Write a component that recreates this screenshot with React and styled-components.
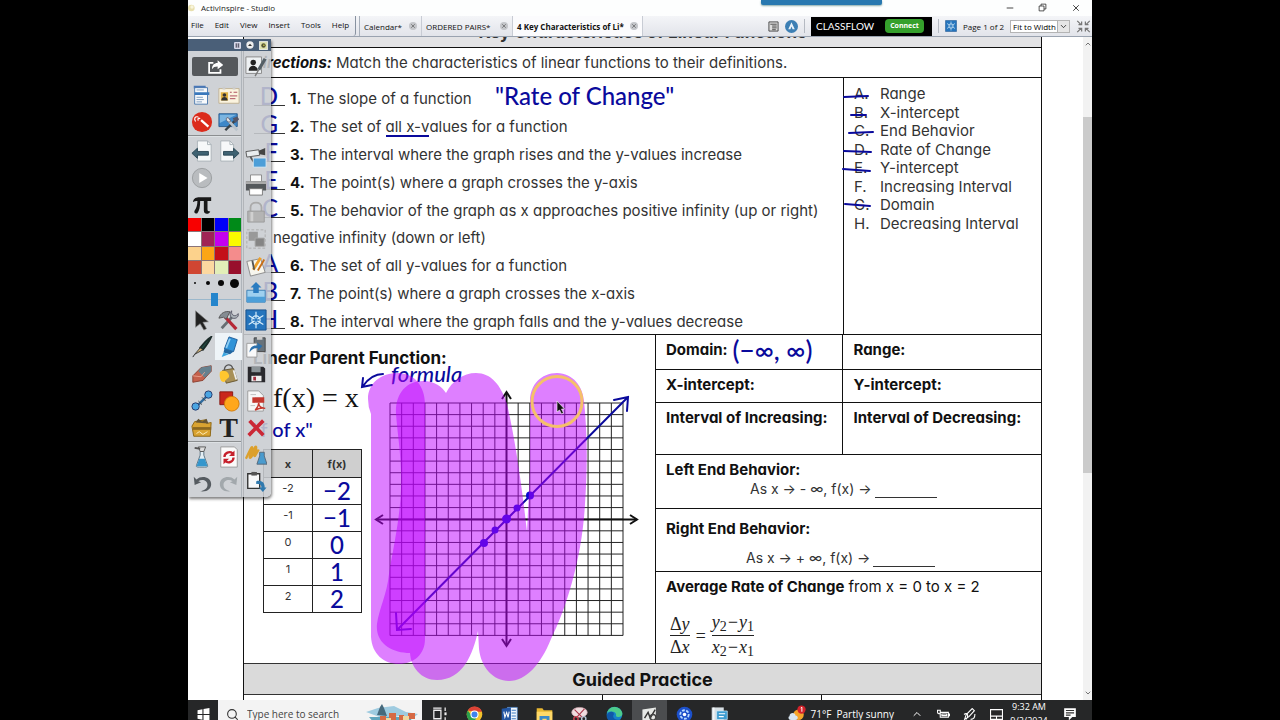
import React, { useState } from 'react'
import styled, { createGlobalStyle } from 'styled-components'
import { Search, ChevronUp, ChevronDown, Minus, X } from 'lucide-react'

const ui = `'Open Sans', 'Noto Sans', sans-serif`
const sheetFont = `Inter, 'Liberation Sans', sans-serif`
const inkBlue = '#0a0a9c'

const GlobalStyle = createGlobalStyle`
  * { box-sizing: border-box; }
  body {
    margin: 0;
    background: #000;
    font-family: ${ui};
    overflow: hidden;
  }
  button, input, select { font: inherit; }
  button { border: 0; padding: 0; background: none; color: inherit; cursor: pointer; }
  ul, ol, p, h2 { margin: 0; padding: 0; list-style: none; }
`

/* ---------- window ---------- */

const Screen = styled.div`
  display: grid;
  grid-template-columns: minmax(0, 1fr);
  padding: 0 188px;
  height: 100vh;
`

const Window = styled.div`
  display: flex;
  flex-direction: column;
  position: relative;
  min-height: 0;
  background: #fff;
`

const TitleBar = styled.header`
  display: flex;
  align-items: center;
  gap: 5px;
  height: 16px;
  font-size: 8px;
  line-height: 16px;
  color: #222;
  background: #fdfefe;
`

const WindowButtons = styled.div`
  display: flex;
  gap: 23px;
  margin-left: auto;
  padding-right: 11px;
  button { display: flex; width: 10px; color: #222; }
`

const DockTab = styled.div`
  position: absolute;
  top: 0;
  right: 210px;
  width: 121px;
  height: 5px;
  border-radius: 0 0 2px 2px;
  background: #2878b0;
  box-shadow: 0 1px 2px #8aa;
`

const MenuBar = styled.div`
  display: flex;
  align-items: stretch;
  height: 21px;
  font-size: 8px;
  color: #111;
  background: linear-gradient(#f4f5f8, #e2e4ea);
  border-bottom: 1px solid #9aa3b0;
`

const Menus = styled.nav`
  display: flex;
  align-items: flex-start;
  gap: 11px;
  width: 168px;
  padding: 3px 0 0 3px;
  border-right: 1px solid #8892a0;
  border-radius: 0 0 3px 0;
`

const Tabs = styled.div`
  display: flex;
  margin-left: 3px;
  border-left: 1px solid #a8b0bb;
`

const Tab = styled.div`
  display: flex;
  align-items: center;
  justify-content: space-between;
  gap: 6px;
  width: ${p => p.$width}px;
  padding: 0 4px;
  white-space: nowrap;
  font-weight: ${p => (p.$active ? 700 : 400)};
  background: ${p => (p.$active ? '#fbfbfd' : 'transparent')};
  border-right: 1px solid #c8ccd4;
`

const CloseTab = styled.button`
  display: grid;
  place-items: center;
  width: 8px;
  height: 8px;
  border-radius: 50%;
  background: #c4c6ca;
  color: #333;
`

const BarTools = styled.div`
  display: flex;
  align-items: center;
  margin-left: auto;
  gap: 6px;
  padding-right: 1px;
  button { display: flex; }
`

const Divider = styled.span`
  width: 1px;
  height: 14px;
  background: #b5bac2;
`

const ClassFlow = styled.div`
  display: flex;
  align-items: center;
  justify-content: space-between;
  width: 121px;
  height: 19px;
  padding: 0 8px 0 5px;
  background: #000;
  color: #fff;
  font: 10px Lato, sans-serif;
`

const Connect = styled.button`
  width: 39px;
  height: 14px;
  justify-content: center;
  border-radius: 4px;
  background: #35a02c;
  color: #fff;
  font: 700 7px/14px 'Open Sans', sans-serif;
`

const ZoomBox = styled.span`
  display: grid;
  grid-template-columns: 1fr 12px;
  align-items: center;
  width: 60px;
  height: 13px;
  border: 1px solid #b4b4b4;
  background: #fff;
  svg { width: 12px; height: 11px; padding: 1px; border-left: 1px solid #b4b4b4; background: #e6e6e6; grid-area: 1 / 2; pointer-events: none; }
`

const ZoomSelect = styled.select`
  appearance: none;
  grid-area: 1 / 1 / 2 / 3;
  height: 11px;
  padding: 0 0 0 2px;
  border: 0;
  background: none;
  font-size: 8px;
  line-height: 11px;
`

const Main = styled.main`
  display: flex;
  flex: 1;
  min-height: 0;
  overflow: hidden;
  padding-left: 55px;
`

/* ---------- worksheet ---------- */

const Sheet = styled.article`
  position: relative;
  flex: 1;
  align-self: flex-start;
  border: solid #111;
  border-width: 0 1px;
  font-family: ${sheetFont};
  font-feature-settings: 'cv11';
  font-size: 15px;
  line-height: 20px;
  color: #333;
`

const SheetTitle = styled.h2`
  display: flex;
  justify-content: center;
  align-items: flex-end;
  height: 10px;
  overflow: hidden;
  background: #e3e3e5;
  font-size: 17px;
  line-height: 30px;
  color: #333;
  white-space: nowrap;
`

const Directions = styled.p`
  height: 31px;
  padding: 5px 8px 0;
  border: solid #111;
  border-width: 1px 0;
  b { color: #111; font-style: italic; }
`

const MatchRow = styled.section`
  display: grid;
  grid-template-columns: 600fr 197fr;
  height: 256px;
`

const Questions = styled.ol`
  display: flex;
  flex-direction: column;
  justify-content: space-between;
  padding: 11px 0 2px;
  border-right: 1px solid #111;
  white-space: nowrap;
`

const Question = styled.li`
  display: flex;
  gap: 5px;
  padding-left: ${p => (p.$continued ? 29 : 10)}px;
  b { min-width: 12px; color: #111; }
`

const Blank = styled.span`
  width: 31px;
  height: 17px;
  padding-right: 7px;
  border-bottom: 1px solid #333;
  text-align: right;
  color: ${inkBlue};
  font: 500 24px/13px Lato, sans-serif;
`

const WordBank = styled.ol`
  display: grid;
  grid-template-rows: repeat(8, 1fr);
  height: 148px;
  margin: 7px 0 0 10px;
  line-height: 18px;
  white-space: nowrap;
  li { display: flex; }
`

const BankLetter = styled.span`
  position: relative;
  width: 26px;
`

const Strike = styled.svg`
  position: absolute;
  left: -12px;
  top: 5px;
`

const Lower = styled.section`
  display: grid;
  grid-template-columns: 412fr 385fr;
  height: 329px;
  border-top: 1px solid #111;
`

const Parent = styled.div`
  position: relative;
  padding: 13px 0 0 9px;
  border-right: 1px solid #111;
  h2 { font-size: 17px; line-height: 20px; color: #111; }
`

const ParentBody = styled.div`
  display: flex;
  gap: 9px;
`

const LeftStack = styled.div`
  display: flex;
  flex-direction: column;
  width: 109px;
`

const Formula = styled.p`
  margin: 15px 0 4px;
  padding-left: 20px;
  color: #111;
  font: 28px/30px 'Liberation Serif', serif;
  white-space: nowrap;
`

const Ink = styled.span`
  color: ${inkBlue};
  font-family: Lato, sans-serif;
  font-weight: 500;
  font-size: ${p => p.$size}px;
  line-height: 24px;
  white-space: nowrap;
`

const FloatingInk = styled(Ink)`
  position: absolute;
  left: ${p => p.$left}px;
  top: ${p => p.$top}px;
  font-style: ${p => (p.$slant ? 'italic' : 'normal')};
`

const InkArrow = styled.svg`
  position: absolute;
  left: 116px;
  top: 36px;
`

const ValueTable = styled.table`
  margin: 8px 0 0 10px;
  width: 99px;
  table-layout: fixed;
  border-collapse: collapse;
  color: #333;
  font-size: 11px;
  line-height: 14px;
  th { height: 28px; padding: 0; border: 1px solid #222; background: #cfcfcf; }
  td { height: 27px; padding: 3px 0 0; border: 1px solid #222; text-align: center; vertical-align: top; }
  td + td { padding: 0; vertical-align: middle; }
`

const Graph = styled.svg`
  position: relative;
  z-index: 1;
  flex: none;
  margin-top: 1px;
  overflow: visible;
`

const Facts = styled.div`
  display: grid;
  grid-template-columns: 187fr 197fr;
  grid-template-rows: 35px 33px 52px 54px 63px 1fr;
  color: #111;
  white-space: nowrap;
`

const Fact = styled.div`
  padding: ${p => p.$pad || 5}px 10px 0;
  grid-column: ${p => (p.$wide ? 'span 2' : 'auto')};
  border-bottom: ${p => (p.$last ? 0 : 1)}px solid #111;
  border-right: ${p => (p.$split ? 1 : 0)}px solid #111;
`

const Answered = styled.div`
  display: flex;
  align-items: center;
  gap: 5px;
  height: 20px;
`

const Limit = styled.p`
  display: flex;
  align-items: flex-end;
  gap: 3px;
  margin-top: ${p => p.$gap}px;
  padding-left: ${p => p.$indent}px;
  font-size: 14px;
  line-height: 18px;
  color: #333;
  i { width: 62px; height: 16px; border-bottom: 1px solid #333; }
`

const Equation = styled.div`
  display: flex;
  align-items: center;
  gap: 5px;
  margin: 14px 0 0 4px;
  color: #222;
  font: italic 18px/22px 'Liberation Serif', serif;
`

const Fraction = styled.span`
  display: flex;
  flex-direction: column;
  text-align: center;
  span:first-child { border-bottom: 1px solid #222; }
  em { font-style: normal; }
  small { position: relative; top: 3px; font-size: 14px; font-style: normal; }
`

const Guided = styled.h2`
  height: 32px;
  border: solid #333;
  border-width: 1px 0;
  background: #dadada;
  color: #111;
  text-align: center;
  font-size: 18px;
  line-height: 32px;
`

const NextRow = styled.div`
  display: grid;
  grid-template-columns: 358fr 219fr 220fr;
  height: 20px;
  span + span { border-left: 1px solid #111; }
`

const Underline = styled.span`
  display: inline-block;
  height: 20px;
  border-bottom: 2px solid ${inkBlue};
`

const ScrollBar = styled.div`
  display: flex;
  flex-direction: column;
  align-items: center;
  justify-content: space-between;
  width: 9px;
  margin-left: 41px;
  background: #f2f2f2;
  color: #333;
  button { display: flex; height: 14px; align-items: center; }
`

const Thumb = styled.div`
  width: 9px;
  height: 356px;
  margin: 66px 0 auto;
  background: #cbcbcb;
`

/* ---------- toolbox ---------- */

const Toolbox = styled.aside`
  position: absolute;
  z-index: 2;
  top: 39px;
  left: 0;
  width: 83px;
  border-radius: 0 0 5px 0;
  overflow: hidden;
  background: rgba(200, 204, 208, 0.88);
  box-shadow: 1px 2px 3px rgba(0, 0, 0, 0.5);
`

const ToolHeader = styled.div`
  display: flex;
  align-items: center;
  justify-content: flex-end;
  gap: 5px;
  height: 12px;
  padding-right: 3px;
  background: #4a5f78;
  button { display: flex; }
`

const ToolColumns = styled.div`
  display: grid;
  grid-template-columns: 54px 1fr;
`

const LeftTools = styled.div`
  border-right: 1px solid #aeb4ba;
`

const RightTools = styled.div`
  padding-top: 2px;
`

const ShareButton = styled.button`
  display: grid;
  place-items: center;
  width: 46px;
  height: 19px;
  margin: 6px 4px 5px;
  border-radius: 2px;
  background: #55585b;
`

const ToolGrid = styled.div`
  display: grid;
  grid-template-columns: 1fr 1fr;
  border-bottom: ${p => (p.$line ? 2 : 0)}px groove #dde1e4;
`

const Tool = styled.button`
  display: grid;
  place-items: center;
  width: 27px;
  height: 27px;
  background: ${p => (p.$on ? '#eef4f8' : 'none')};
  margin-bottom: ${p => (p.$gap ? 64 : 0)}px;
`

const Palette = styled.div`
  display: grid;
  grid-template-columns: repeat(4, 1fr);
  gap: 1px;
  height: 56px;
  background: #8a7478;
`

const Swatch = styled.button`
  background: ${p => p.$color};
`

const Sizes = styled.div`
  display: grid;
  grid-template-columns: repeat(4, 1fr);
  height: 18px;
  place-items: center;
`

const Dot = styled.button`
  width: ${p => p.$size}px;
  height: ${p => p.$size}px;
  border-radius: 50%;
  background: #080808;
`

const WidthSlider = styled.input`
  appearance: none;
  display: block;
  width: 53px;
  height: 14px;
  margin: 0;
  background: linear-gradient(#9bb8cc, #9bb8cc) center / 100% 1px no-repeat;
  &::-webkit-slider-thumb {
    appearance: none;
    width: 7px;
    height: 13px;
    background: #2585cc;
  }
`

/* ---------- taskbar ---------- */

const TaskbarClip = styled.footer`
  height: 20px;
  overflow: hidden;
`

const Taskbar = styled.div`
  display: flex;
  align-items: center;
  height: 28px;
  background: #262728;
  color: #fff;
  font-size: 10px;
`

const TaskButton = styled.button`
  display: grid;
  place-items: center;
  width: ${p => p.$width || 35}px;
  height: 28px;
  background: ${p => (p.$on ? '#4b4d4f' : 'none')};
`

const SearchBox = styled.label`
  display: flex;
  align-items: center;
  gap: 8px;
  width: 204px;
  height: 28px;
  padding-left: 8px;
  background: #f3f3f3;
  color: #333;
  input {
    width: 110px;
    padding: 0;
    border: 0;
    outline: 0;
    background: none;
    font-size: 10px;
  }
  input::placeholder { color: #444; }
`

const Tray = styled.div`
  display: flex;
  align-items: center;
  margin-left: auto;
`

const Weather = styled.button`
  display: flex;
  align-items: center;
  gap: 5px;
  margin-right: 10px;
  white-space: nowrap;
`

const Clock = styled.time`
  width: 38px;
  text-align: center;
  font-size: 9px;
  line-height: 14px;
  white-space: nowrap;
`

/* ---------- icons ---------- */

const Svg = ({ s = 22, children, ...rest }) => (
  <svg width={s} height={s} viewBox="0 0 24 24" fill="none" {...rest}>{children}</svg>
)

const icons = {
  browser: <><path d="M3 2h13v3H3z" fill="#4a78b8" /><path d="M4 4h14v18H4z" fill="#f8fafc" stroke="#4876ac" /><path d="M4 9h16v3H4z" fill="#3978bc" /><path d="M6 6.500h8M6 14.500h7M6 17h8M6 19.500h6" stroke="#7798bc" /></>,
  idCard: <><path d="M1 5h22v16H1z" fill="#fbf4df" stroke="#c0b090" /><path d="M3 9h8v9H3z" fill="#e0b040" /><circle cx="7" cy="12" r="2" fill="#333" /><path d="M3.500 18c0-5 7-5 7 0z" fill="#333" /><path d="M13 9h2m2 0h4M13 13h8m-8 3h6" stroke="#a45" /><path d="M5 3h3v3H5zM16 3h3v3h-3z" fill="#ccc" /></>,
  record: <><circle cx="12" cy="12" r="11" fill="#db2b1b" /><path d="M11 10l8 7" stroke="#fff" strokeWidth="2.500" /><path d="M10 8.500c-2-1.500-3 0-2 2M8 6.500c-4-1-5 2-3 5" stroke="#fff" strokeWidth="1.300" /></>,
  designer: <><path d="M1 3h20v14H1z" fill="#3d87c8" stroke="#2a5b8c" /><path d="M2 4h18L2 13z" fill="#7ab4e0" /><path d="M8 21l10-10" stroke="#3a4248" strokeWidth="2.600" /><path d="M12 11l9 10" stroke="#b9c3cb" strokeWidth="3" /><path d="M9 8c0 4 3 5 5 3l-3-4z" fill="#dde4e8" stroke="#667" /><path d="M16 8l5-2 2 3-4 4z" fill="#556" /></>,
  prev: <><path d="M9 1h9l4 4v18H7V1z" fill="#f6f8f9" stroke="#aab2b8" /><path d="M18 1v4h4" stroke="#aab2b8" /><path d="M1 14.500l6-5.500v3.500h12v4H7V20z" fill="#3f6272" stroke="#294552" /></>,
  next: <><path d="M3 1h10l4 4v18H3z" fill="#f6f8f9" stroke="#aab2b8" /><path d="M13 1v4h4" stroke="#aab2b8" /><path d="M23 14.500L17 9v3.500H6v4h11V20z" fill="#3f6272" stroke="#294552" /></>,
  play: <><circle cx="12" cy="12" r="10.500" fill="#b9bcbf" stroke="#999c9f" /><path d="M9 6.500l9 5.500-9 5.500z" fill="#fff" /></>,
  pi: <path d="M2 9c1-5 4-5.500 7-5.500h13v4h-4V17c0 2 1 2 3 2-1 3-7 4-7-1V7.500h-4C10 14 9 18 7 21c-3 1-4-1-3-3 2-3 3-6 3-10.500-2 0-3 0-5 1.500z" fill="#181818" />,
  pointer: <path d="M5 2l14 12-6 .5 4 7-3 1.500-4-7-5 4z" fill="#222" stroke="#888" strokeWidth=".7" />,
  tools: <><path d="M4 21L17 7" stroke="#666d72" strokeWidth="3" /><path d="M8 9l12 13" stroke="#b52836" strokeWidth="3.500" /><path d="M1 10c2-6 7-8 12-7l-4 8-3-2z" fill="#858c92" stroke="#555" /><path d="M15 2c-1 4 2 6 5 5l2-2c1 4-3 6-6 5s-4-6-1-8z" fill="#aab3b8" stroke="#556" /></>,
  pen: <><path d="M22 1c-5 3-9 8-12 12l3 2c4-5 7-9 9-14z" fill="#234b42" stroke="#1a2a28" strokeWidth="2" /><path d="M10 13l-6 7 9-5z" fill="#d8b878" stroke="#333" /><path d="M4 20l-2 3" stroke="#222" /></>,
  highlighter: <><path d="M12 1l9 3-4 13-10-3z" fill="#2f93d8" stroke="#1a5a98" /><path d="M7 14l10 3-4 3-7-2z" fill="#2166a0" /><path d="M6 18l6 2-8 3z" fill="#3aa5e0" /><path d="M13 3l-4 10" stroke="#90cdf2" strokeWidth="2" /></>,
  eraser: <><path d="M2 14l9-9 11-2v6l-9 10-11 2z" fill="#c5604c" stroke="#8a4030" /><path d="M11 5l11-2v6l-7 7-7-7z" fill="#65808e" /><path d="M2 14l9 1 4-5" stroke="#e8a08c" /></>,
  fill: <><path d="M5 8l12-2 4 13-12 3z" fill="#a89058" stroke="#665530" /><path d="M7 8c0-7 8-8 9-2" stroke="#555" strokeWidth="1.500" /><path d="M2 10c3-3 9-1 10 3s-3 3-4 7c-3 2-7-1-6-10z" fill="#ffc62e" /><path d="M17 8l3 10" stroke="#eee" strokeWidth="2" /></>,
  connector: <><path d="M5 19L19 5" stroke="#2f6b9e" strokeWidth="2.500" /><circle cx="19" cy="5" r="4" fill="#4aa5e2" stroke="#236" /><circle cx="5" cy="18" r="4" fill="#4aa5e2" stroke="#236" /><path d="M12 8l4 4M8 12l4 4" stroke="#444" /></>,
  shapes: <><path d="M2 2h14v14H2z" fill="#c9281c" stroke="#851810" /><circle cx="15" cy="15" r="8" fill="#ffa71c" stroke="#d07808" /></>,
  clips: <><path d="M1 10l3-5 12-2 1 4 5-1-1 15H3z" fill="#d9a331" stroke="#8a6412" /><path d="M5 6l3-4 4 3 5-3 2 5" fill="#665533" /><path d="M2 11h20v3H2z" fill="#8c6820" /><path d="M6 18l3-2 4 3 5-3" stroke="#fff0c0" /></>,
  undo: <path d="M3 4l1 9 7-3-3-1c4-3 10-1 10 4 0 4-4 6-8 7 8 1 12-3 12-8C22 4 11 2 6 7z" fill="#555b60" />,
  redo: <path d="M21 4l-1 9-7-3 3-1C12 6 6 8 6 13c0 4 4 6 8 7-8 1-12-3-12-8C2 4 13 2 18 7z" fill="#a2a8ac" />,
  flask: <><path d="M10 6h4v4l4 11c1 2-1 2-3 2H9c-2 0-4 0-3-2l4-11z" fill="#e4eef4" stroke="#557080" /><path d="M9 14h6l3 8H6z" fill="#3596cc" /><path d="M8 1h8l-2 5h-4z" fill="#ddd" stroke="#555" /><path d="M10 3L4 2" stroke="#555" strokeWidth="2" /></>,
  reset: <><path d="M3 1h15l3 3v19H3z" fill="#fafafa" stroke="#999" /><path d="M7 12a5.500 5.500 0 0 1 9-4M17 12.500a5.500 5.500 0 0 1-9 4" stroke="#c6202c" strokeWidth="2.500" /><path d="M18 5v6h-6zM6 20v-6h6z" fill="#c6202c" /></>,
  profile: <><path d="M1 1h17v18H1z" fill="#eef1f3" stroke="#888" /><circle cx="9" cy="7" r="3" fill="#222" /><path d="M4 16c0-7 10-7 10 0z" fill="#222" /><path d="M22 3l-7 12" stroke="#555f66" strokeWidth="3.500" /><path d="M15 15l-4 7" stroke="#777" strokeWidth="1.500" /></>,
  camera: <><path d="M1 5l14-2 1 6-14 2z" fill="#e8ecee" stroke="#555" /><path d="M15 4l7-3v8l-6-1z" fill="#444" /><path d="M6 11l4 6" stroke="#555" strokeWidth="2" /><path d="M9 12h14v10H9z" fill="#4c9ed8" stroke="#dfeaf2" /></>,
  printer: <><path d="M6 1h12v8H6z" fill="#fafafa" stroke="#888" /><path d="M1 8h22v10H1z" fill="#54585b" /><path d="M1 8h22v3H1z" fill="#aaa" /><path d="M5 16h14v7H5z" fill="#fff" stroke="#777" /></>,
  lock: <><path d="M6 12V7c0-7 12-7 12 0v5" stroke="#aaa" strokeWidth="2" /><path d="M3 11h18v12H3z" fill="#b4b4b4" stroke="#999" /><path d="M6 12h3v10H6z" fill="#d0d0d0" /></>,
  group: <><path d="M2 2h20v20H2z" stroke="#aaa" strokeDasharray="3 2" /><path d="M4 4h10v10H4z" fill="#999" /><path d="M11 11h10v9H11z" fill="#858585" stroke="#aaa" /></>,
  notes: <><path d="M2 7l15-3 5 15-16 4z" fill="#f7f6ee" stroke="#888" /><path d="M9 16L17 3" stroke="#f0a028" strokeWidth="3" /><path d="M14 17l7-12" stroke="#c96d16" strokeWidth="2" /><path d="M8 6l2 10" stroke="#555" strokeWidth="2" /></>,
  upload: <><path d="M2 9h20v13H2z" fill="#9fd0ef" stroke="#3a7eb4" /><path d="M2 16h20v6H2z" fill="#4d9fd8" /><path d="M12 0l6 6h-3v6H9V6H6z" fill="#2b7cc0" /></>,
  atom: <><path d="M1 1h22v22H1z" fill="#2575bd" stroke="#164f8a" /><g stroke="#d9eefa" strokeWidth="1.300"><circle cx="12" cy="12" r="4.500" /><path d="M12 3v18M4 7l16 10M20 7L4 17" /></g><circle cx="12" cy="12" r="2" fill="#2575bd" /></>,
  paste: <><path d="M10 2h12v15H10z" fill="#68727a" stroke="#444" /><path d="M13 0h6v4h-6z" fill="#ccc" /><path d="M2 8h11v15H2z" fill="#f8f9fa" stroke="#999" /><path d="M5 18c0-6 4-8 9-8l-1-3 6 4-5 5v-3c-4 0-7 2-9 5z" fill="#2b70ac" /></>,
  save: <><path d="M3 4h17l2 2v15H3z" fill="#29292d" /><path d="M7 4h10v6H7z" fill="#8c9498" /><path d="M7 14h11v6H7z" fill="#eee" /><path d="M9 15h3v4H9z" fill="#a33040" /></>,
  pdf: <><path d="M3 1h12l5 5v17H3z" fill="#f6f6f6" stroke="#999" /><path d="M8 8h13v6H8z" fill="#c5362d" /><path d="M11 22c3-3 4-5 4-8 0 4 3 6 7 6-4-1-7 0-11 2z" fill="#fff" stroke="#c5362d" strokeWidth="1.500" /><path d="M6 5h6M6 17h5" stroke="#bbb" /></>,
  remove: <path d="M5 4l15 16M20 4L4 20" stroke="#cb2836" strokeWidth="4" />,
  annotate: <><path d="M1 16C5 8 7 2 8 4s-5 12-2 11 4-13 6-12-4 11-1 10l4-7" stroke="#dca02c" strokeWidth="2.500" /><path d="M16 9h5v4l3 9H13l3-9z" fill="#4a9bce" stroke="#567" /></>,
  duplicate: <><path d="M3 3h13v16H3z" fill="#f8f9fa" stroke="#333" strokeWidth="1.500" /><path d="M7 1h6v4H7z" fill="#555" /><path d="M12 14c4 0 6 1 6 4h-3l4.500 5 4-5h-2c0-6-4-8-9-7z" fill="#2f79ae" /></>,
}

const TextTool = styled.span`
  font: 700 28px/26px 'Liberation Serif', serif;
  color: #222;
`

const topTools = ['browser', 'idCard', 'record', 'designer']
const pageTools = ['prev', 'next', 'play']
const drawTools = ['pointer', 'tools', 'pen', 'highlighter', 'eraser', 'fill', 'connector', 'shapes', 'clips', 'text']
const lastTools = ['flask', 'reset', 'undo', 'redo']
const sideTools = ['profile', 'camera', 'printer', 'lock', 'group', 'notes', 'upload', 'atom', 'paste', 'save', 'pdf', 'remove', 'annotate', 'duplicate']

const colors = [
  '#f80000', '#000000', '#0000f8', '#008a18',
  '#ffffff', '#a02455', '#c400ee', '#fafa00',
  '#fcd28c', '#fca616', '#c41018', '#f48c8c',
  '#d04632', '#fcd8a0', '#e2eeb8', '#98102c',
]

const questions = [
  ['D', '1.', 'The slope of a function'],
  ['G', '2.', <>The set of <Underline>all x-v</Underline>alues for a function</>],
  ['F', '3.', 'The interval where the graph rises and the y-values increase'],
  ['E', '4.', 'The point(s) where a graph crosses the y-axis'],
  ['C', '5.', 'The behavior of the graph as x approaches positive infinity (up or right)'],
  [null, '', 'negative infinity (down or left)'],
  ['A', '6.', 'The set of all y-values for a function'],
  ['B', '7.', 'The point(s) where a graph crosses the x-axis'],
  ['H', '8.', 'The interval where the graph falls and the y-values decrease'],
]

const bank = [
  ['A.', 'Range', [2, 26, 7, 6]],
  ['B.', 'X-intercept', [9, 24, 6, 6]],
  ['C.', 'End Behavior', [7, 31, 6, 5]],
  ['D.', 'Rate of Change', [2, 29, 5, 6]],
  ['E.', 'Y-intercept', [1, 28, 5, 7]],
  ['F.', 'Increasing Interval'],
  ['G.', 'Domain', [3, 28, 3, 5]],
  ['H.', 'Decreasing Interval'],
]

const values = [['-2', '−2'], ['-1', '−1'], ['0', '0'], ['1', '1'], ['2', '2']]

function ToolButtons({ names, active, onPick }) {
  return names.map(name => (
    <Tool key={name} aria-label={name} $on={active === name} $gap={name === 'profile'} onClick={() => onPick(name)}>
      {name === 'text' ? <TextTool>T</TextTool> : <Svg>{icons[name]}</Svg>}
    </Tool>
  ))
}

function ToolPanel() {
  const [tool, setTool] = useState('highlighter')
  const [penWidth, setPenWidth] = useState(50)

  return (
    <Toolbox>
      <ToolHeader>
        <button aria-label="Pin"><Svg s={7}><path d="M2 2h20v20H2z" fill="#bbc" stroke="#eef" strokeWidth="3" /><path d="M8 5v14M15 5v14" stroke="#445" strokeWidth="3" /></Svg></button>
        <button aria-label="Roll up"><Svg s={8}><circle cx="12" cy="12" r="11" fill="#eee" /><path d="M6 15l6-7 6 7z" fill="#333" /></Svg></button>
        <button aria-label="Profile"><Svg s={9}><path d="M1 1h22v22H1z" fill="#dfe3b0" stroke="#fff" strokeWidth="2" /><circle cx="12" cy="12" r="6" fill="#553" /><circle cx="13" cy="11" r="2" fill="#dd4" /></Svg></button>
      </ToolHeader>
      <ToolColumns>
        <LeftTools>
          <ShareButton aria-label="Share">
            <Svg s={17}><path d="M9 7H3v14h16v-5" stroke="#fff" strokeWidth="2.500" /><path d="M7 16c0-6 3-9 8-9V3l8 7-8 6v-4c-4 0-6 1-8 4z" fill="#fff" /></Svg>
          </ShareButton>
          <ToolGrid $line><ToolButtons names={topTools} active={tool} onPick={setTool} /></ToolGrid>
          <ToolGrid><ToolButtons names={pageTools} active={tool} onPick={setTool} /></ToolGrid>
          <ToolGrid><ToolButtons names={['pi']} active={tool} onPick={setTool} /></ToolGrid>
          <Palette>
            {colors.map(c => <Swatch key={c} $color={c} aria-label={c} />)}
          </Palette>
          <Sizes>
            {[2, 4, 6, 9].map(s => <Dot key={s} $size={s} aria-label={`${s} px`} />)}
          </Sizes>
          <WidthSlider type="range" aria-label="Pen width" value={penWidth} onChange={e => setPenWidth(e.target.value)} />
          <ToolGrid $line><ToolButtons names={drawTools} active={tool} onPick={setTool} /></ToolGrid>
          <ToolGrid><ToolButtons names={lastTools} active={tool} onPick={setTool} /></ToolGrid>
        </LeftTools>
        <RightTools><ToolButtons names={sideTools} active={tool} onPick={setTool} /></RightTools>
      </ToolColumns>
    </Toolbox>
  )
}

// Drawn in the coordinates of the flipchart page, 20 x 20 cells
function Plot() {
  const lines = Array.from({ length: 21 }, (_, i) => i)
  return (
    <Graph width="272" height="280" viewBox="370 370 272 280" fill="none">
      <g stroke="#222">
        {lines.map(i => <path key={i} d={`M${389 + i * 11.65} 404V636.500M389 ${404 + i * 11.62}H622`} />)}
      </g>
      <g stroke="#111" strokeWidth="2">
        <path d="M375 520.500H636M505.500 394V646" />
        <path d="M382 516l-7 4.500 7 4.500M629 516l7 4.500-7 4.500M501 400l4.500-7 4.500 7M501 640l4.500 7 4.500-7" />
      </g>
      <path d="M397 630L626 399M395 614l1 17 14-1M613 401l14-3-1 14" stroke={inkBlue} strokeWidth="2" strokeLinecap="round" />
      <g fill="#0808d0">
        <circle cx="483" cy="544" r="4" />
        <circle cx="494" cy="531" r="3.500" />
        <circle cx="505.500" cy="520" r="4.500" />
        <circle cx="516" cy="509" r="3.500" />
        <circle cx="529" cy="496.500" r="4" />
      </g>
      <g fill="rgba(190, 0, 255, 0.5)">
        <path d="M367 400C367 384 380 374 397 374C414 374 424 388 424 405V640C424 655 413 665 398 665C383 665 371 655 370 638V415Q367 408 367 400Z" />
        <path d="M376 625C378 610 386 595 388 575C392 550 399 520 400 490C401 460 397 440 395 415C394 395 405 382 422 382C434 382 441 388 445 394C451 382 462 374 475 374C490 374 500 386 506 405C514 440 520 480 526 533L529 470V402C529 386 540 374 556 374C572 374 582 388 583 402C587 440 586 475 584 505C581 560 565 610 550 640C540 665 525 682 508 682C492 682 480 668 478 650L477 632C472 655 462 681 436 681C420 681 410 668 409 654C392 654 374 645 376 625Z" />
      </g>
      <circle cx="556" cy="402.500" r="25" stroke="#f5c06a" strokeWidth="3" />
      <path d="M556 402v11l2.500-2 2 4 2-1-2-4h3z" fill="#111" stroke="#fff" strokeWidth=".6" />
    </Graph>
  )
}

function Worksheet() {
  return (
    <Sheet>
      <SheetTitle>Key Characteristics of Linear Functions</SheetTitle>
      <Directions><b>Directions:</b> Match the characteristics of linear functions to their definitions.</Directions>

      <MatchRow>
        <Questions>
          {questions.map(([answer, number, text]) => (
            <Question key={number} $continued={!answer}>
              {answer && <Blank>{answer}</Blank>}
              {answer && <b>{number}</b>}
              <span>{text}</span>
            </Question>
          ))}
        </Questions>
        <WordBank>
          {bank.map(([letter, word, mark]) => (
            <li key={letter}>
              <BankLetter>
                {letter}
                {mark && (
                  <Strike width="36" height="10" stroke={inkBlue} strokeWidth="2" strokeLinecap="round">
                    <path d={`M${mark[0]} ${mark[2]}L${mark[1]} ${mark[3]}`} />
                  </Strike>
                )}
              </BankLetter>
              {word}
            </li>
          ))}
        </WordBank>
      </MatchRow>
      <FloatingInk $size={24} $left={251} $top={47}>"Rate of Change"</FloatingInk>

      <Lower>
        <Parent>
          <h2>Linear Parent Function:</h2>
          <FloatingInk $size={22} $left={147} $top={27} $slant>formula</FloatingInk>
          <InkArrow width="26" height="18" fill="none" stroke={inkBlue} strokeWidth="2" strokeLinecap="round">
            <path d="M23 3C14 3 8 8 3 15M3 7L2 16L12 14" />
          </InkArrow>
          <ParentBody>
            <LeftStack>
              <Formula>f(x) = x</Formula>
              <Ink $size={20}>"f of x"</Ink>
              <ValueTable>
                <thead><tr><th>x</th><th>f(x)</th></tr></thead>
                <tbody>
                  {values.map(([x, y]) => (
                    <tr key={x}><td>{x}</td><td><Ink $size={24}>{y}</Ink></td></tr>
                  ))}
                </tbody>
              </ValueTable>
            </LeftStack>
            <Plot />
          </ParentBody>
        </Parent>

        <Facts>
          <Fact $split>
            <Answered><b>Domain:</b><Ink $size={26}>(−∞, ∞)</Ink></Answered>
          </Fact>
          <Fact><b>Range:</b></Fact>
          <Fact $split><b>X-intercept:</b></Fact>
          <Fact><b>Y-intercept:</b></Fact>
          <Fact $split><b>Interval of Increasing:</b></Fact>
          <Fact><b>Interval of Decreasing:</b></Fact>
          <Fact $wide>
            <b>Left End Behavior:</b>
            <Limit $gap={0} $indent={84}>As x → - ∞, f(x) →<i /></Limit>
          </Fact>
          <Fact $wide $pad={10}>
            <b>Right End Behavior:</b>
            <Limit $gap={10} $indent={80}>As x → + ∞, f(x) →<i /></Limit>
          </Fact>
          <Fact $wide $last>
            <b>Average Rate of Change</b> from x = 0 to x = 2
            <Equation>
              <Fraction>
                <span><em>Δ</em>y</span>
                <span><em>Δ</em>x</span>
              </Fraction>
              =
              <Fraction>
                <span>y<small>2</small>−y<small>1</small></span>
                <span>x<small>2</small>−x<small>1</small></span>
              </Fraction>
            </Equation>
          </Fact>
        </Facts>
      </Lower>

      <Guided>Guided Practice</Guided>
      <NextRow><span /><span /><span /></NextRow>
    </Sheet>
  )
}

const taskIcons = {
  taskView: <><path d="M4 6h10v12H4zM4 2v2M14 2v2M4 22v-2M14 22v-2M4 3h10M4 21h10M20 2v5M20 16v6" stroke="#eee" strokeWidth="1.800" /><path d="M19 9h3v4h-3z" fill="#eee" /></>,
  chrome: <><circle cx="12" cy="12" r="11" fill="#f4c22c" /><path d="M2.500 6.500A11 11 0 0 1 22.500 8H12z" fill="#dd4236" /><path d="M2.500 6.500A11 11 0 0 0 11 23l5-8.500-9-2z" fill="#2ba04e" /><circle cx="12" cy="12" r="5" fill="#3f83ee" stroke="#fff" strokeWidth="1.500" /></>,
  word: <><path d="M9 2h14v20H9z" fill="#f1f6fc" stroke="#4c88cc" /><path d="M15 6h6m-6 4h6m-6 4h6m-6 4h6" stroke="#3c7ac0" strokeWidth="1.500" /><path d="M1 4l13-2v20L1 20z" fill="#2256a4" /><path d="M4 8l1.500 8L8 9l2 7 1.500-8" stroke="#fff" strokeWidth="1.500" /></>,
  explorer: <><path d="M1 3h8l2 3h12v16H1z" fill="#e8b730" /><path d="M1 8h22v14H1z" fill="#ffd968" /><path d="M5 22v-8h14v8h-4v-4H9v4z" fill="#3b8ac8" /></>,
  snip: <><ellipse cx="12" cy="9" rx="11" ry="7" fill="#f0dde0" stroke="#c8a0a8" /><path d="M5 5l12 12M19 4L8 16" stroke="#a8354a" strokeWidth="1.500" /><circle cx="7" cy="18" r="3" stroke="#d04050" strokeWidth="2" /><circle cx="18" cy="18" r="3" stroke="#b8c8d8" strokeWidth="2" /></>,
  edge: <><circle cx="12" cy="12" r="11" fill="#1683c8" /><path d="M1.500 10C4-2 21-1 23 10c1 6-7 7-9 4 2-6-8-8-12.500-4z" fill="#4ccb8c" /><path d="M1 13c2-6 11-7 10-1-3 4 2 9 9 7C13 27 0 22 1 13z" fill="#1058a8" /></>,
  inspire: <><path d="M2 5l19-3v19l-19 2z" fill="#e7e9e6" /><path d="M5 17l5-8 3 8 7-12" stroke="#333" strokeWidth="2" /><circle cx="17" cy="16" r="4" stroke="#444" strokeWidth="2" /></>,
  wheel: <><circle cx="12" cy="12" r="11" fill="#1c50ca" /><circle cx="12" cy="12" r="6" stroke="#b5d8ff" strokeWidth="2.500" strokeDasharray="4 2" /><circle cx="12" cy="12" r="2.500" fill="#fff" /></>,
  panel: <><path d="M1 2h17v20H1z" fill="#d7dfe4" /><path d="M8 7h15v12H8z" fill="#3a9bd0" stroke="#cfeaf8" /><path d="M4 2v20M11 11h9M11 15h7" stroke="#fff" strokeWidth="1.500" /></>,
}

function TaskRow() {
  return (
    <TaskbarClip>
      <Taskbar>
        <TaskButton $width={30} aria-label="Start">
          <Svg s={13}><path d="M1 4l9-1.500V11H1zM12 2l11-2v11H12zM1 13h9v8.500L1 20zM12 13h11v11l-11-2z" fill="#fff" /></Svg>
        </TaskButton>
        <SearchBox>
          <Search size={13} />
          <input placeholder="Type here to search" aria-label="Search" />
          <svg width="54" height="20" viewBox="0 0 54 20" fill="none">
            <path d="M1 8l12-4 16-2 12 6 12 2-5 4-14-2-14 3z" fill="#9ecbe0" />
            <path d="M12 11l3-8 2-3 2 4 3 8z" fill="#45697c" />
            <path d="M4 13h44l-5 7H10z" fill="#5fa5bd" />
            <path d="M15 12h6v5h-6zM24 9h7v7h-7zM34 11h5v5h-5zM43 9h7v6h-7z" fill="#d66a45" />
            <path d="M21 14h5v5h-5zM38 12h6v5h-6z" fill="#f0d8a0" />
          </svg>
        </SearchBox>
        {Object.keys(taskIcons).map(name => (
          <TaskButton key={name} aria-label={name} $on={name === 'inspire'}>
            <Svg s={17}>{taskIcons[name]}</Svg>
          </TaskButton>
        ))}
        <Tray>
          <Weather>
            <Svg s={18}><circle cx="14" cy="13" r="7" fill="#f6a52a" /><path d="M2 15c0-5 7-6 8-1 4 0 4 6 0 6H4c-4 0-4-5-2-5z" fill="#d8e6f2" /><circle cx="18" cy="6" r="5.500" fill="#d3222a" /><path d="M17 4l1.500-1v6" stroke="#fff" strokeWidth="1.300" /></Svg>
            <span>71°F</span><span>Partly sunny</span>
          </Weather>
          <TaskButton $width={26} aria-label="Show hidden icons"><ChevronUp size={12} /></TaskButton>
          <TaskButton $width={26} aria-label="Battery"><Svg s={13} stroke="#fff" strokeWidth="2"><path d="M6 8h15v9H6zM21 11h2v3h-2M1 4h5v4c0 4-5 3-5 0zM9 11h9v3H9z" /></Svg></TaskButton>
          <TaskButton $width={26} aria-label="Pen"><Svg s={13} stroke="#fff" strokeWidth="2"><path d="M3 21l3-9L17 1l4 4-10 11zM2 12c6-6 9 3 4 9M14 21c5 0 8-4 8-10" /></Svg></TaskButton>
          <TaskButton $width={28} aria-label="Touchpad"><Svg s={13} stroke="#fff" strokeWidth="2"><path d="M1 3h22v18H1zM1 15h22M12 15v6" /></Svg></TaskButton>
          <Clock>9:32 AM<br />9/2/2024</Clock>
          <TaskButton $width={44} aria-label="Notifications"><Svg s={14}><path d="M2 2h20v15h-6l-6 6v-6H2z" fill="#fff" /><path d="M5 6h14M5 10h14M5 14h8" stroke="#333" strokeWidth="2" /></Svg></TaskButton>
        </Tray>
      </Taskbar>
    </TaskbarClip>
  )
}

function App() {
  return (
    <Screen>
      <GlobalStyle />
      <Window>
        <TitleBar>
          <Svg s={8}><circle cx="10" cy="12" r="10" fill="#e8dfae" /><circle cx="12" cy="9" r="5" fill="#f8f5dc" /></Svg>
          ActivInspire - Studio
          <WindowButtons>
            <button aria-label="Minimize"><Minus size={10} /></button>
            <button aria-label="Restore"><Svg s={9} stroke="#222" strokeWidth="2"><path d="M3 8h13v13H3zM8 8V3h13v13h-5" /></Svg></button>
            <button aria-label="Close"><X size={10} /></button>
          </WindowButtons>
        </TitleBar>
        <DockTab />
        <MenuBar>
          <Menus>
            {['File', 'Edit', 'View', 'Insert', 'Tools', 'Help'].map(m => <button key={m}>{m}</button>)}
          </Menus>
          <Tabs>
            {[['Calendar*', 62], ['ORDERED PAIRS*', 91], ['4 Key Characteristics of Li*', 130]].map(([name, width], i) => (
              <Tab key={name} $width={width} $active={i === 2}>
                {name}
                <CloseTab aria-label={`Close ${name}`}><X size={6} /></CloseTab>
              </Tab>
            ))}
          </Tabs>
          <BarTools>
            <button aria-label="Notes"><Svg s={11}><path d="M2 2h20v20H2z" fill="#ddd" stroke="#444" strokeWidth="2" /><path d="M5 7h14M9 11h10M9 15h10M9 19h8" stroke="#444" strokeWidth="2" /></Svg></button>
            <button aria-label="Account"><Svg s={13}><circle cx="12" cy="12" r="12" fill="#3c7fb4" /><path d="M12 4l6 13h-4l-2-5-2 5H6z" fill="#e8f2fa" /></Svg></button>
            <Divider />
            <ClassFlow>CLASSFLOW<Connect>Connect</Connect></ClassFlow>
            <Divider />
            <button aria-label="Dashboard"><Svg s={12}>{icons.atom}</Svg></button>
            <span>Page 1 of 2</span>
            <ZoomBox>
              <ZoomSelect aria-label="Zoom"><option>Fit to Width</option></ZoomSelect>
              <ChevronDown />
            </ZoomBox>
            <button aria-label="Full screen"><Svg s={15} stroke="#777" strokeWidth="2"><path d="M2 3l6 6M22 3l-6 6M2 21l6-6M22 21l-6-6M4 9h5V4M20 9h-5V4M4 15h5v5M20 15h-5v5" /></Svg></button>
          </BarTools>
        </MenuBar>
        <Main>
          <Worksheet />
          <ScrollBar>
            <button aria-label="Scroll up"><ChevronUp size={8} /></button>
            <Thumb />
            <button aria-label="Scroll down"><ChevronDown size={8} /></button>
          </ScrollBar>
        </Main>
        <ToolPanel />
        <TaskRow />
      </Window>
    </Screen>
  )
}

export default App
